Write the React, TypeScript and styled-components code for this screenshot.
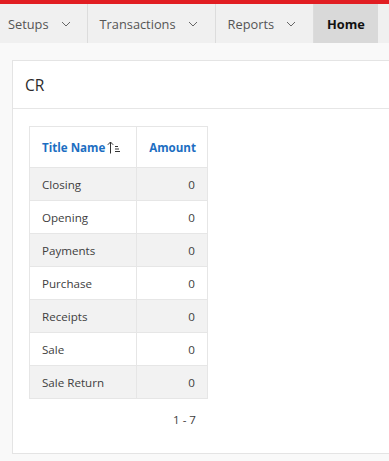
import styled, { createGlobalStyle } from "styled-components";

const GlobalStyle = createGlobalStyle`
  html, body {
    margin: 0;
    padding: 0;
    background: #f9f9f9;
    overflow: hidden;
    font-family: "Open Sans", "Noto Sans", sans-serif;
  }
  * {
    box-sizing: border-box;
  }
`;

const Page = styled.div`
  width: 389px;
  height: 461px;
  display: flex;
  flex-direction: column;
  overflow: hidden;
`;

const RedStrip = styled.div`
  height: 4px;
  background: #e11d22;
`;

const NavBar = styled.nav`
  height: 39px;
  display: flex;
  align-items: stretch;
  background: #f0f0f0;
`;

const NavItem = styled.div<{ $active?: boolean; $first?: boolean }>`
  display: flex;
  align-items: center;
  gap: 12px;
  padding: ${(p) => (p.$active ? "0 13px 0 13px" : p.$first ? "0 16px 0 8px" : "0 17px 0 12px")};
  font-size: 12.8px;
  color: ${(p) => (p.$active ? "#111" : "#555")};
  font-weight: ${(p) => (p.$active ? 700 : 400)};
  background: ${(p) => (p.$active ? "#d9d9d9" : "transparent")};
  border-right: ${(p) => (p.$active ? "none" : "1px solid #dcdcdc")};
  white-space: nowrap;
`;

const Content = styled.main`
  flex: 1;
  padding: 17px 0 0 12px;
`;

const Card = styled.section`
  height: 394px;
  background: #fff;
  border: 1px solid #e4e4e4;
  border-right: none;
  display: flex;
  flex-direction: column;
`;

const CardHeader = styled.header`
  height: 48px;
  display: flex;
  align-items: center;
  padding: 0 12px;
  font-size: 15.5px;
  color: #2b2b2b;
  border-bottom: 1px solid #e6e6e6;
`;

const CardBody = styled.div`
  padding: 17px 16px;
  display: flex;
  flex-direction: column;
  align-items: flex-start;
`;

const TableWrap = styled.div`
  display: flex;
  flex-direction: column;
  align-items: flex-end;
`;

const Table = styled.table`
  border-collapse: collapse;
  table-layout: fixed;
  width: 178px;
  font-size: 11.6px;
`;

const HeadCell = styled.th<{ $right?: boolean; $width: number }>`
  width: ${(p) => p.$width}px;
  height: 41px;
  padding: 0 11px 0 12px;
  border: 1px solid #e6e6e6;
  background: #fff;
  color: #1c6ec2;
  font-weight: 700;
  text-align: ${(p) => (p.$right ? "right" : "left")};
  white-space: nowrap;
`;

const HeadInner = styled.span`
  display: inline-flex;
  align-items: center;
  gap: 2px;
  & svg {
    flex-shrink: 0;
  }
`;

const Row = styled.tr<{ $alt?: boolean }>`
  background: ${(p) => (p.$alt ? "#f2f2f2" : "#fff")};
`;

const Cell = styled.td<{ $right?: boolean }>`
  height: 33px;
  padding: 0 12px;
  border: 1px solid #e6e6e6;
  color: #404040;
  text-align: ${(p) => (p.$right ? "right" : "left")};
  white-space: nowrap;
`;

const Pagination = styled.div`
  margin-top: 13px;
  padding-right: 12px;
  font-size: 11.6px;
  color: #404040;
`;

const Chevron = () => (
  <svg width="10" height="6" viewBox="0 0 10 6" fill="none">
    <path d="M1 1l4 4 4-4" stroke="#666" strokeWidth="1" />
  </svg>
);

const SortIcon = () => (
  <svg width="14" height="13" viewBox="0 0 14 13" fill="none">
    <path d="M3.5 12.5V1M0.8 3.8L3.5 1l2.7 2.8" stroke="#333" strokeWidth="1" />
    <path d="M8 5.5h3M8 8h4M8 10.5h5" stroke="#333" strokeWidth="1" />
  </svg>
);

const rows = [
  "Closing",
  "Opening",
  "Payments",
  "Purchase",
  "Receipts",
  "Sale",
  "Sale Return",
];

export default function App() {
  return (
    <Page>
      <GlobalStyle />
      <RedStrip />
      <NavBar>
        <NavItem $first>
          Setups <Chevron />
        </NavItem>
        <NavItem>
          Transactions <Chevron />
        </NavItem>
        <NavItem>
          Reports <Chevron />
        </NavItem>
        <NavItem $active>Home</NavItem>
      </NavBar>
      <Content>
        <Card>
          <CardHeader>CR</CardHeader>
          <CardBody>
            <TableWrap>
              <Table>
                <thead>
                  <tr>
                    <HeadCell $width={107}>
                      <HeadInner>
                        Title Name <SortIcon />
                      </HeadInner>
                    </HeadCell>
                    <HeadCell $right $width={71}>
                      Amount
                    </HeadCell>
                  </tr>
                </thead>
                <tbody>
                  {rows.map((name, i) => (
                    <Row key={name} $alt={i % 2 === 0}>
                      <Cell>{name}</Cell>
                      <Cell $right>0</Cell>
                    </Row>
                  ))}
                </tbody>
              </Table>
              <Pagination>1 - 7</Pagination>
            </TableWrap>
          </CardBody>
        </Card>
      </Content>
    </Page>
  );
}
